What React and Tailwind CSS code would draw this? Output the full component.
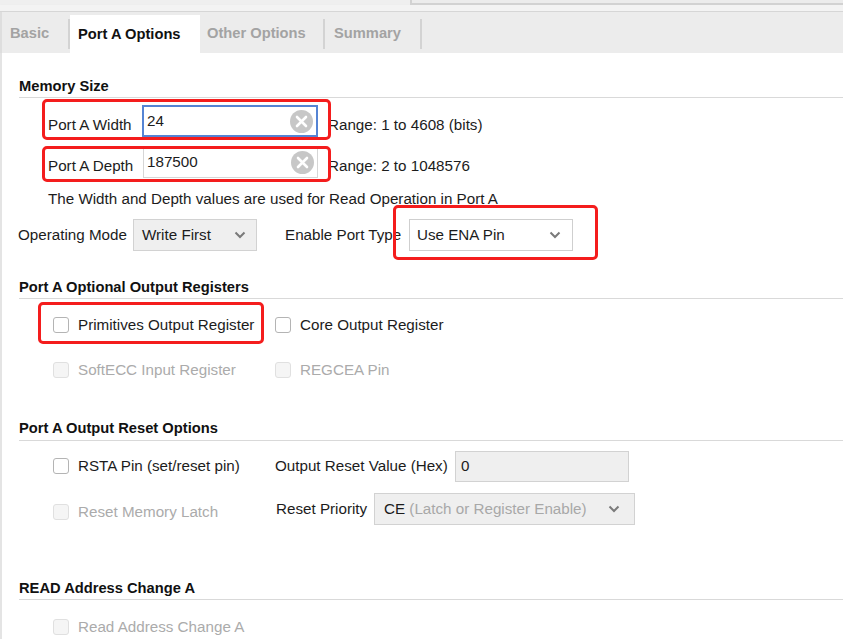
import React from "react";

const Chevron = ({ className = "" }) => (
  <svg width="12" height="8" viewBox="0 0 12 8" className={className}>
    <path d="M1.5 1.5 L6 6 L10.5 1.5" fill="none" stroke="#7a7a7a" strokeWidth="2" />
  </svg>
);

const ClearIcon = () => (
  <svg width="23" height="23" viewBox="0 0 23 23">
    <circle cx="11.5" cy="11.5" r="11.5" fill="#c7c7c7" />
    <path d="M7 7 L16 16 M16 7 L7 16" stroke="#ffffff" strokeWidth="2.6" strokeLinecap="round" />
  </svg>
);

const Box = ({ disabled }) => (
  <span
    className={
      "inline-block w-[16px] h-[16px] rounded-[3px] border shrink-0 " +
      (disabled ? "border-[#e0e0e0] bg-[#f5f5f5]" : "border-[#b4b4b4] bg-white")
    }
  />
);

const Check = ({ label, disabled, w }) => (
  <div className={"flex items-center gap-[9px] " + (w || "")}>
    <Box disabled={disabled} />
    <span className={disabled ? "text-[#ababab]" : "text-[#1c1c1c]"}>{label}</span>
  </div>
);

const Heading = ({ children, mt }) => (
  <div className={"ml-[17px] h-[21px] border-b border-[#d9d9d9] font-bold text-[14.7px] leading-[18px] text-[#111] " + mt}>
    {children}
  </div>
);

const Red = ({ cls }) => (
  <div className={"absolute border-[3px] border-[#f41d1d] rounded-[5px] pointer-events-none " + cls} />
);

export default function App() {
  return (
    <div className="relative w-[843px] h-[639px] overflow-hidden bg-white font-['Liberation_Sans',Arial,sans-serif] text-[15.2px] text-[#1c1c1c]">
      {/* top strip */}
      <div className="flex h-[5px] bg-[#efefef]">
        <div className="w-[410px]" />
        <div className="flex-1 border-l-2 border-b-2 border-[#d2d2d2] bg-[#ececec]" />
      </div>
      <div className="h-[7px] bg-[#f3f3f3] border-b border-[#d6d6d6] shadow-[0_1px_2px_rgba(0,0,0,0.08)]" />
      {/* tabs */}
      <div className="flex h-[41px] bg-[#ececec] border-l-2 border-[#dedede] font-bold text-[14.7px]">
        <div className="w-[66px] pl-[8px] pt-[2px] flex items-center text-[#a3a3a3]">Basic</div>
        <div className="w-[2px] self-center h-[30px] bg-[#d3d3d3] mt-[2px]" />
        <div className="w-[130px] mt-[3px] bg-white pl-[8px] flex items-center text-[#111]">Port A Options</div>
        <div className="w-[123px] pl-[7px] pt-[2px] flex items-center text-[#a3a3a3]">Other Options</div>
        <div className="w-[2px] self-center h-[30px] bg-[#d3d3d3] mt-[2px]" />
        <div className="w-[95px] pl-[9px] pt-[2px] flex items-center text-[#a3a3a3]">Summary</div>
        <div className="w-[2px] self-center h-[30px] bg-[#d3d3d3] mt-[2px]" />
      </div>

      {/* content */}
      <div className="border-l-2 border-[#e4e4e4] h-[586px]">
        <Heading mt="pt-[24px] h-[45px]">Memory Size</Heading>

        <div className="mt-[7px] h-[32px] flex items-center">
          <div className="pl-[46px] pt-[8px] shrink-0 box-content" style={{ width: 94 }}>
            Port A Width
          </div>
          <div className="w-[176px] h-[32px] border-2 border-[#5584d4] flex items-center pl-[3px] pr-[3px] pt-[1px] bg-white">
            <span className="flex-1">24</span>
            <ClearIcon />
          </div>
          <div className="ml-[10px] pt-[8px]">Range: 1 to 4608 (bits)</div>
        </div>

        <div className="mt-[9px] h-[32px] flex items-center">
          <div className="pl-[46px] pt-[8px] shrink-0 box-content" style={{ width: 95 }}>
            Port A Depth
          </div>
          <div className="w-[175px] h-[32px] border border-[#d6d6d6] flex items-center pl-[3px] pr-[3px] bg-white">
            <span className="flex-1">187500</span>
            <ClearIcon />
          </div>
          <div className="ml-[10px] pt-[8px]">Range: 2 to 1048576</div>
        </div>

        <div className="mt-[12px] h-[16px] leading-[17px] pl-[46px]">
          The Width and Depth values are used for Read Operation in Port A
        </div>

        <div className="mt-[13px] h-[32px] flex items-center pl-[16px]">
          <div className="w-[115px]">Operating Mode</div>
          <div className="w-[124px] h-[32px] border border-[#d2d2d2] bg-[#efefef] flex items-center pl-[8px] pr-[10px]">
            <span className="flex-1">Write First</span>
            <Chevron />
          </div>
          <div className="ml-[28px] w-[124px]">Enable Port Type</div>
          <div className="w-[164px] h-[32px] border border-[#cfcfcf] bg-white flex items-center pl-[7px] pr-[11px]">
            <span className="flex-1">Use ENA Pin</span>
            <Chevron />
          </div>
        </div>

        <Heading mt="mt-[27px]">Port A Optional Output Registers</Heading>

        <div className="mt-[10px] h-[32px] flex items-center pl-[51px]">
          <Check label="Primitives Output Register" w="w-[222px]" />
          <Check label="Core Output Register" />
        </div>
        <div className="mt-[13px] h-[32px] flex items-center pl-[51px]">
          <Check label="SoftECC Input Register" disabled w="w-[222px]" />
          <Check label="REGCEA Pin" disabled />
        </div>

        <Heading mt="mt-[33px] h-[22px]">Port A Output Reset Options</Heading>

        <div className="mt-[10px] h-[31px] flex items-center pl-[51px]">
          <Check label="RSTA Pin (set/reset pin)" w="w-[222px]" />
          <div className="w-[180px]">Output Reset Value (Hex)</div>
          <div className="w-[174px] h-[31px] border border-[#d2d2d2] bg-[#efefef] flex items-center pl-[5px]">0</div>
        </div>
        <div className="mt-[11px] h-[32px] flex items-center pl-[51px]">
          <div className="pt-[7px]">
            <Check label="Reset Memory Latch" disabled w="w-[223px]" />
          </div>
          <div className="w-[98px]">Reset Priority</div>
          <div className="w-[261px] h-[32px] border border-[#d2d2d2] bg-[#efefef] flex items-center pl-[9px] pr-[14px]">
            <span className="flex-1">
              CE <span className="text-[#a8a8a8]">(Latch or Register Enable)</span>
            </span>
            <Chevron />
          </div>
        </div>

        <Heading mt="mt-[54px]">READ Address Change A</Heading>

        <div className="mt-[19px] h-[16px] flex items-center pl-[51px]">
          <Check label="Read Address Change A" disabled />
        </div>
      </div>

      {/* annotation boxes */}
      <Red cls="left-[42px] top-[99px] w-[289px] h-[41px]" />
      <Red cls="left-[42px] top-[146px] w-[289px] h-[36px]" />
      <Red cls="left-[393px] top-[205px] w-[205px] h-[55px]" />
      <Red cls="left-[38px] top-[302px] w-[226px] h-[42px]" />
    </div>
  );
}
